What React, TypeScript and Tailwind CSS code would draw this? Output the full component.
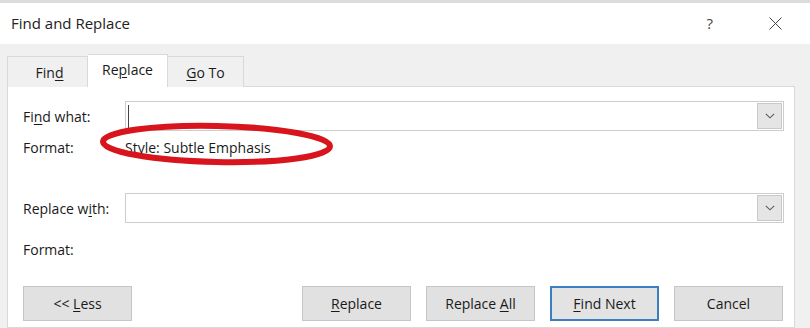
function U({ children }: { children: string }) {
  return <span className="underline underline-offset-2 decoration-1">{children}</span>;
}

function ComboBox({ cursor }: { cursor?: boolean }) {
  return (
    <div className="flex h-[30px] border border-[#cdcdcd] bg-white">
      <div className="flex-1 flex items-center pl-[2px]">
        {cursor && <div className="w-px h-[23px] bg-[#444]" />}
      </div>
      <div className="w-[25px] my-px mr-px flex items-center justify-center bg-[#e5e5e5] border border-[#c9c9c9]">
        <svg width="10" height="6" viewBox="0 0 10 6">
          <path d="M0.8 0.8 L5 4.8 L9.2 0.8" stroke="#5a5a5a" strokeWidth="1.1" fill="none" />
        </svg>
      </div>
    </div>
  );
}

function Button({ children, primary }: { children: React.ReactNode; primary?: boolean }) {
  return (
    <div
      className={
        primary
          ? "w-[109px] h-[35px] flex items-center justify-center bg-[#e3e3e3] border-2 border-[#3b7fc0] text-[#1a1a1a]"
          : "w-[109px] h-[35px] flex items-center justify-center bg-[#e1e1e1] border border-[#c6c6c6] text-[#1a1a1a]"
      }
    >
      <span className="whitespace-pre">{children}</span>
    </div>
  );
}

export default function App() {
  return (
    <div
      className="w-[810px] h-[328px] overflow-hidden bg-[#f0f0f0] text-[14px] text-[#1a1a1a] flex flex-col"
      style={{ fontFamily: '"Open Sans", "Noto Sans", sans-serif' }}
    >
      <div className="h-[3px] bg-[#dcdcdc]" />
      {/* title bar */}
      <div className="h-[41px] bg-white flex items-center pl-[11px] pr-[28px]">
        <span className="text-[15px] text-[#222]">Find and Replace</span>
        <span className="ml-auto text-[15px] text-[#444] mr-[56px]">?</span>
        <svg width="13" height="13" viewBox="0 0 13 13" className="text-[#444]">
          <path d="M0.5 0.5 L12.5 12.5 M12.5 0.5 L0.5 12.5" stroke="currentColor" strokeWidth="1" fill="none" />
        </svg>
      </div>

      <div className="flex-1 flex flex-col pl-[7px] pr-[15px] pt-[10px]">
        {/* tabs */}
        <div className="flex items-end h-[33px] -mb-px relative z-10">
          <div className="w-[81px] h-[31px] flex items-center justify-center border border-b-0 border-[#d9d9d9] bg-[#f0f0f0] pl-[4px]">
            <span>
              Fin<U>d</U>
            </span>
          </div>
          <div className="w-[80px] h-[33px] flex items-center justify-center border border-b-0 border-l-0 border-[#d9d9d9] bg-white pb-[3px]">
            <span>
              Re<U>p</U>lace
            </span>
          </div>
          <div className="w-[76px] h-[31px] flex items-center justify-center border border-b-0 border-l-0 border-[#d9d9d9] bg-[#f0f0f0]">
            <span>
              <U>G</U>o To
            </span>
          </div>
        </div>

        {/* panel */}
        <div className="flex-1 relative bg-white border border-[#d9d9d9] pl-[15px] pr-[10px] pt-[14px]">
          <div className="grid grid-cols-[102px_1fr] items-center">
            <span>
              Fi<U>n</U>d what:
            </span>
            <ComboBox cursor />
          </div>
          <div className="grid grid-cols-[102px_1fr] items-center h-[20px] mt-[6px]">
            <span>Format:</span>
            <span>Style: Subtle Emphasis</span>
          </div>
          <div className="grid grid-cols-[102px_1fr] items-center mt-[36px]">
            <span>
              Replace w<U>i</U>th:
            </span>
            <ComboBox />
          </div>
          <div className="h-[20px] flex items-center mt-[16px]">
            <span>Format:</span>
          </div>
          <div className="flex items-center mt-[27px] pr-px">
            <Button>
              {"<< "}
              <U>L</U>ess
            </Button>
            <div className="ml-auto flex gap-[15px]">
              <Button>
                <U>R</U>eplace
              </Button>
              <Button>
                {"Replace "}
                <U>A</U>ll
              </Button>
              <Button primary>
                <U>F</U>ind Next
              </Button>
              <Button>Cancel</Button>
            </div>
          </div>

          {/* red annotation ellipse */}
          <svg className="absolute left-[88px] top-[33px] pointer-events-none" width="250" height="52" viewBox="0 0 250 52">
            <ellipse cx="120.5" cy="24" rx="113.5" ry="18" fill="none" stroke="#d8141c" strokeWidth="6" transform="rotate(1.2 120.5 24)" />
          </svg>
        </div>
      </div>
    </div>
  );
}
